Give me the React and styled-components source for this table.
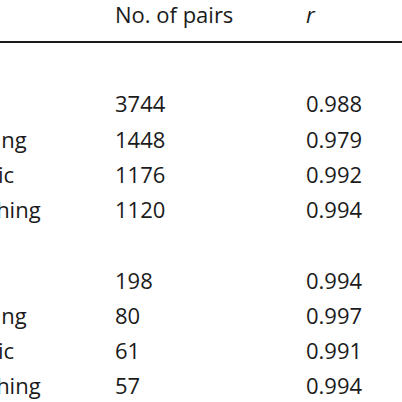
import React from 'react';
import styled, { createGlobalStyle } from 'styled-components';

const GlobalStyle = createGlobalStyle`
  html, body {
    margin: 0;
    padding: 0;
    background: #ffffff;
  }
  body {
    font-family: "Open Sans", "Noto Sans", "Liberation Sans", sans-serif;
    color: #1b1b1b;
  }
`;

const Frame = styled.div`
  width: 402px;
  height: 402px;
  overflow: hidden;
  background: #ffffff;
`;

const Table = styled.div`
  margin-left: -63.5px;
  width: 600px;
  font-size: 22px;
`;

const Row = styled.div`
  display: grid;
  grid-template-columns: 178.5px 191px 1fr;
  height: ${(p) => p.$height || '35.25px'};
  line-height: ${(p) => p.$height || '35.25px'};
  white-space: nowrap;
`;

const HeadRow = styled(Row)`
  border-bottom: 2px solid #1b1b1b;
  padding-bottom: 13px;
`;

const Body = styled.div`
  padding-top: 8px;
`;

const Cell = styled.div`
  font-style: ${(p) => (p.$italic ? 'italic' : 'normal')};
`;

const groups = [
  {
    title: 'Men',
    rows: [
      { label: 'All', n: 3744, r: '0.988' },
      { label: 'Standing', n: 1448, r: '0.979' },
      { label: 'Ballistic', n: 1176, r: '0.992' },
      { label: 'Stretching', n: 1120, r: '0.994' },
    ],
  },
  {
    title: 'Boys',
    rows: [
      { label: 'All', n: 198, r: '0.994' },
      { label: 'Standing', n: 80, r: '0.997' },
      { label: 'Ballistic', n: 61, r: '0.991' },
      { label: 'Stretching', n: 57, r: '0.994' },
    ],
  },
];

const App = () => {
  return (
    <Frame>
      <GlobalStyle />
      <Table>
        <HeadRow $height="28px">
          <Cell>Test</Cell>
          <Cell>No. of pairs</Cell>
          <Cell $italic>r</Cell>
        </HeadRow>
        <Body>
          {groups.map((g) => (
            <React.Fragment key={g.title}>
              <Row>
                <Cell>{g.title}</Cell>
                <Cell />
                <Cell />
              </Row>
              {g.rows.map((v, i) => (
                <Row key={i}>
                  <Cell>{v.label}</Cell>
                  <Cell>{v.n}</Cell>
                  <Cell>{v.r}</Cell>
                </Row>
              ))}
            </React.Fragment>
          ))}
        </Body>
      </Table>
    </Frame>
  );
};

export default App;
